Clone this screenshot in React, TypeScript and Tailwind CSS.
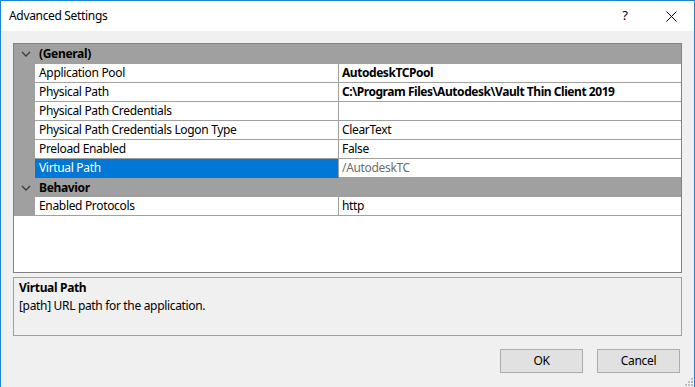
import React from "react";

const Chevron = () => (
  <svg width="10" height="6" viewBox="0 0 10 6" className="block">
    <path d="M1 1 L5 5 L9 1" fill="none" stroke="#3c3c3c" strokeWidth="1.3" />
  </svg>
);

type Row = { name: string; value: string; bold?: boolean; selected?: boolean };

const general: Row[] = [
  { name: "Application Pool", value: "AutodeskTCPool", bold: true },
  { name: "Physical Path", value: "C:\\Program Files\\Autodesk\\Vault Thin Client 2019", bold: true },
  { name: "Physical Path Credentials", value: "" },
  { name: "Physical Path Credentials Logon Type", value: "ClearText" },
  { name: "Preload Enabled", value: "False" },
  { name: "Virtual Path", value: "/AutodeskTC", selected: true },
];

const behavior: Row[] = [{ name: "Enabled Protocols", value: "http" }];

function Header({ label, h }: { label: string; h: string }) {
  return (
    <div className={`flex items-center bg-[#a0a0a0] ${h}`}>
      <div className="w-[21px] flex justify-center pl-[2px]">
        <Chevron />
      </div>
      <div className="pl-[4px] font-bold">{label}</div>
    </div>
  );
}

function PropRow({ r }: { r: Row }) {
  return (
    <div className="flex h-[19px]">
      <div className="w-[21px] bg-[#a0a0a0]" />
      <div
        className={`w-[304px] border-b border-r border-[#a0a0a0] pl-[4px] flex items-center whitespace-nowrap ${
          r.selected ? "bg-[#0078d7] text-white border-b-[#0078d7]" : "bg-white"
        }`}
      >
        {r.name}
      </div>
      <div
        className={`flex-1 border-b border-[#a0a0a0] pl-[3px] flex items-center whitespace-nowrap ${
          r.bold ? "font-bold tracking-[-0.45px]" : ""
        } ${r.selected ? "text-[#6d6d6d]" : ""}`}
      >
        {r.value}
      </div>
    </div>
  );
}

export default function App() {
  return (
    <div className="w-[695px] h-[387px] bg-[#f0f0f0] border-x border-t border-[#1883d7] flex flex-col font-['Noto_Sans',sans-serif] text-[12px] tracking-[-0.33px] text-black relative overflow-hidden">
      <div className="h-[30px] bg-white flex items-center shrink-0">
        <div className="pl-[8px] text-[12px] text-black">Advanced Settings</div>
        <div className="flex-1" />
        <div className="w-[46px] h-[30px] flex items-center justify-center text-[13px]">?</div>
        <div className="w-[46px] h-[30px] flex items-center justify-center">
          <svg width="11" height="11" viewBox="0 0 11 11">
            <path d="M0.5 0.5 L10.5 10.5 M10.5 0.5 L0.5 10.5" stroke="#000" strokeWidth="1" fill="none" />
          </svg>
        </div>
      </div>
      <div className="flex flex-col px-[12px] pt-[12px]">
        <div className="h-[230px] border border-[#828282] bg-white flex flex-col">
          <Header label="(General)" h="h-[20px]" />
          {general.map((r) => (
            <PropRow key={r.name} r={r} />
          ))}
          <Header label="Behavior" h="h-[19px]" />
          {behavior.map((r) => (
            <PropRow key={r.name} r={r} />
          ))}
        </div>
        <div className="mt-[4px] h-[59px] border border-[#a0a0a0] bg-[#f0f0f0] px-[5px] pt-[1px] leading-[18px]">
          <div className="font-bold">Virtual Path</div>
          <div>[path] URL path for the application.</div>
        </div>
        <div className="mt-[13px] flex justify-end gap-[14px] pr-[2px]">
          <button className="w-[83px] h-[24px] bg-[#e1e1e1] border border-[#adadad] flex items-center justify-center">
            OK
          </button>
          <button className="w-[83px] h-[24px] bg-[#e1e1e1] border border-[#adadad] flex items-center justify-center">
            Cancel
          </button>
        </div>
      </div>
      <svg width="10" height="10" viewBox="0 0 10 10" className="absolute right-[1px] bottom-[1px]">
        {[
          [8, 0],
          [8, 3],
          [5, 3],
          [8, 6],
          [5, 6],
          [2, 6],
        ].map(([x, y], i) => (
          <rect key={i} x={x} y={y + 2} width="2" height="2" fill="#bcbcbc" />
        ))}
      </svg>
    </div>
  );
}
